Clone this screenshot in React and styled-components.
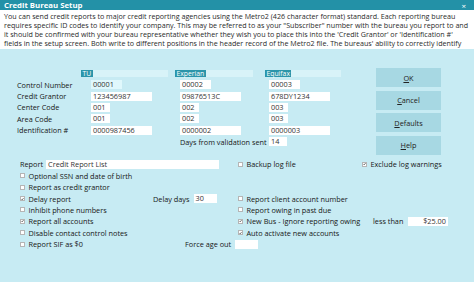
import React from 'react'
import styled, { createGlobalStyle } from 'styled-components'

const GlobalStyle = createGlobalStyle`
  html, body {
    margin: 0;
    padding: 0;
    background: #c7ebf3;
  }
  body {
    font-family: "Open Sans", "Noto Sans", sans-serif;
  }
`

const Window = styled.div`
  width: 474px;
  height: 282px;
  overflow: hidden;
  background: #c7ebf3;
  color: #161616;
  font-size: 7.3px;
`

const TitleBar = styled.div`
  height: 10px;
  background: #2391a7;
  color: #fff;
  display: flex;
  align-items: center;
  justify-content: space-between;
  padding: 0 8px 0 4px;
  font-weight: 700;
  font-size: 7.8px;
`

const Close = styled.span`
  font-size: 8px;
  font-weight: 400;
`

const Intro = styled.div`
  background: #fff;
  height: 39px;
  box-sizing: border-box;
  padding: 1.5px 4px 0;
  line-height: 9px;
  font-size: 7.15px;
  color: #2a2a2a;

  p {
    margin: 0;
    white-space: nowrap;
  }
`

const Upper = styled.div`
  display: flex;
  align-items: flex-start;
  padding: 19px 33px 0 17px;
`

const IdGrid = styled.div`
  display: grid;
  grid-template-columns: 74px 89px 89px 89px;
  grid-template-rows: 11px repeat(6, 11.4px);
  align-items: center;
`

const ColHead = styled.div`
  margin-left: ${p => -p.$inset}px;
  width: ${p => p.$w}px;
  height: 7px;
  background: #d8f3f8;
  display: flex;
`

const HeadTag = styled.span`
  background: #2a95aa;
  color: #fff;
  padding: 0 1.5px;
  line-height: 7px;
  font-size: 6.8px;
`

const Label = styled.span`
  white-space: nowrap;
  padding-left: ${p => p.$pad || 0}px;
`

const Field = styled.div`
  width: ${p => p.$w}px;
  height: 9px;
  box-sizing: border-box;
  padding: 0 2px;
  line-height: 9px;
  background: ${p => (p.$active ? '#e0f8fc' : '#fff')};
  color: #333;
  text-align: ${p => (p.$right ? 'right' : 'left')};
  white-space: nowrap;
  overflow: hidden;
`

const Buttons = styled.div`
  margin-left: auto;
  display: flex;
  flex-direction: column;
  gap: 3.5px;
`

const Button = styled.button`
  width: 65px;
  height: 19px;
  padding: 0;
  border: none;
  background: #a7d8e3;
  color: #222;
  font-family: inherit;
  font-size: 7.3px;

  u {
    text-decoration-thickness: 0.5px;
    text-underline-offset: 1px;
  }
`

const ReportRow = styled.div`
  display: flex;
  align-items: center;
  height: 11.7px;
  margin-top: 3.8px;
  padding-left: 20px;
`

const Inline = styled.div`
  display: flex;
  align-items: center;
  gap: ${p => p.$gap || 3}px;
  padding-left: ${p => p.$pad || 0}px;
  width: ${p => (p.$w ? `${p.$w}px` : 'auto')};
  grid-column: ${p => p.$col || 'auto'};
`

const CheckRow = styled.div`
  display: flex;
  align-items: center;
  gap: 3.5px;
  white-space: nowrap;
  grid-column: ${p => p.$col || 'auto'};
  width: ${p => (p.$w ? `${p.$w}px` : 'auto')};
`

const Box = styled.span`
  width: 5px;
  height: 5px;
  box-sizing: border-box;
  border: 0.8px solid #b5b5b5;
  background: #fff;
  display: inline-flex;
  align-items: center;
  justify-content: center;
  flex: none;
`

const Lower = styled.div`
  display: grid;
  grid-template-columns: 133px 85px 135px 80px;
  grid-auto-rows: 11.43px;
  align-items: center;
  padding-left: 20px;
`

function Check({ checked, children, col, w }) {
  return (
    <CheckRow $col={col} $w={w}>
      <Box>
        {checked && (
          <svg width="4" height="4" viewBox="0 0 4 4">
            <path d="M0.5 2 L1.6 3.2 L3.5 0.7" fill="none" stroke="#333" strokeWidth="0.8" />
          </svg>
        )}
      </Box>
      {children}
    </CheckRow>
  )
}

const bureaus = [
  { name: 'TU', inset: 10, band: 87, values: ['00001', '123456987', '001', '001', '0000987456'] },
  { name: 'Experian', inset: 5, band: 78, values: ['00002', '09876513C', '002', '002', '0000002'] },
  { name: 'Equifax', inset: 4, band: 76, values: ['00003', '678DY1234', '003', '003', '0000003'] },
]

const rowLabels = ['Control Number', 'Credit Grantor', 'Center Code', 'Area Code', 'Identification #']
const widths = [31, 61, 19, 19, 61]

export default function App() {
  return (
    <Window>
      <GlobalStyle />
      <TitleBar>
        <span>Credit Bureau Setup</span>
        <Close>×</Close>
      </TitleBar>
      <Intro>
        <p>You can send credit reports to major credit reporting agencies using the Metro2 (426 character format) standard. Each reporting bureau</p>
        <p>requires specific ID codes to identify your company. This may be referred to as your "Subscriber" number with the bureau you report to and</p>
        <p>it should be confirmed with your bureau representative whether they wish you to place this into the 'Credit Grantor' or 'Identification #'</p>
        <p>fields in the setup screen. Both write to different positions in the header record of the Metro2 file.  The bureaus' ability to correctly identify</p>
      </Intro>

      <Upper>
        <IdGrid>
          <span />
          {bureaus.map(b => (
            <ColHead key={b.name} $inset={b.inset} $w={b.band}>
              <HeadTag>{b.name}</HeadTag>
            </ColHead>
          ))}
          {rowLabels.map((label, i) => (
            <React.Fragment key={label}>
              <Label>{label}</Label>
              {bureaus.map(b => (
                <Field key={b.name} $w={widths[i]} $active={i === 0 && b.name === 'TU'}>
                  {b.values[i]}
                </Field>
              ))}
            </React.Fragment>
          ))}
          <span />
          <span />
          <Label>Days from validation sent</Label>
          <Field $w={18}>14</Field>
        </IdGrid>

        <Buttons>
          <Button><u>O</u>K</Button>
          <Button><u>C</u>ancel</Button>
          <Button><u>D</u>efaults</Button>
          <Button><u>H</u>elp</Button>
        </Buttons>
      </Upper>

      <ReportRow>
        <Inline $w={218}>
          <Label>Report</Label>
          <Field $w={173}>Credit Report List</Field>
        </Inline>
        <Check w={124}>Backup log file</Check>
        <Check checked>Exclude log warnings</Check>
      </ReportRow>

      <Lower>
        <Check col="1">Optional SSN and date of birth</Check>
        <Check col="1">Report as credit grantor</Check>
        <Check col="1" checked>Delay report</Check>
        <Inline $col="2" $gap={4}>
          <Label>Delay days</Label>
          <Field $w={23}>30</Field>
        </Inline>
        <Check col="3">Report client account number</Check>
        <Check col="1">Inhibit phone numbers</Check>
        <Check col="3">Report owing in past due</Check>
        <Check col="1" checked>Report all accounts</Check>
        <Check col="3" checked>New Bus - Ignore reporting owing</Check>
        <Inline $col="4" $gap={4.5}>
          <Label>less than</Label>
          <Field $w={40} $right>$25.00</Field>
        </Inline>
        <Check col="1">Disable contact control notes</Check>
        <Check col="3" checked>Auto activate new accounts</Check>
        <Check col="1">Report SIF as $0</Check>
        <Inline $col="2 / 4" $pad={32} $gap={4}>
          <Label>Force age out</Label>
          <Field $w={23} />
        </Inline>
      </Lower>
    </Window>
  )
}
